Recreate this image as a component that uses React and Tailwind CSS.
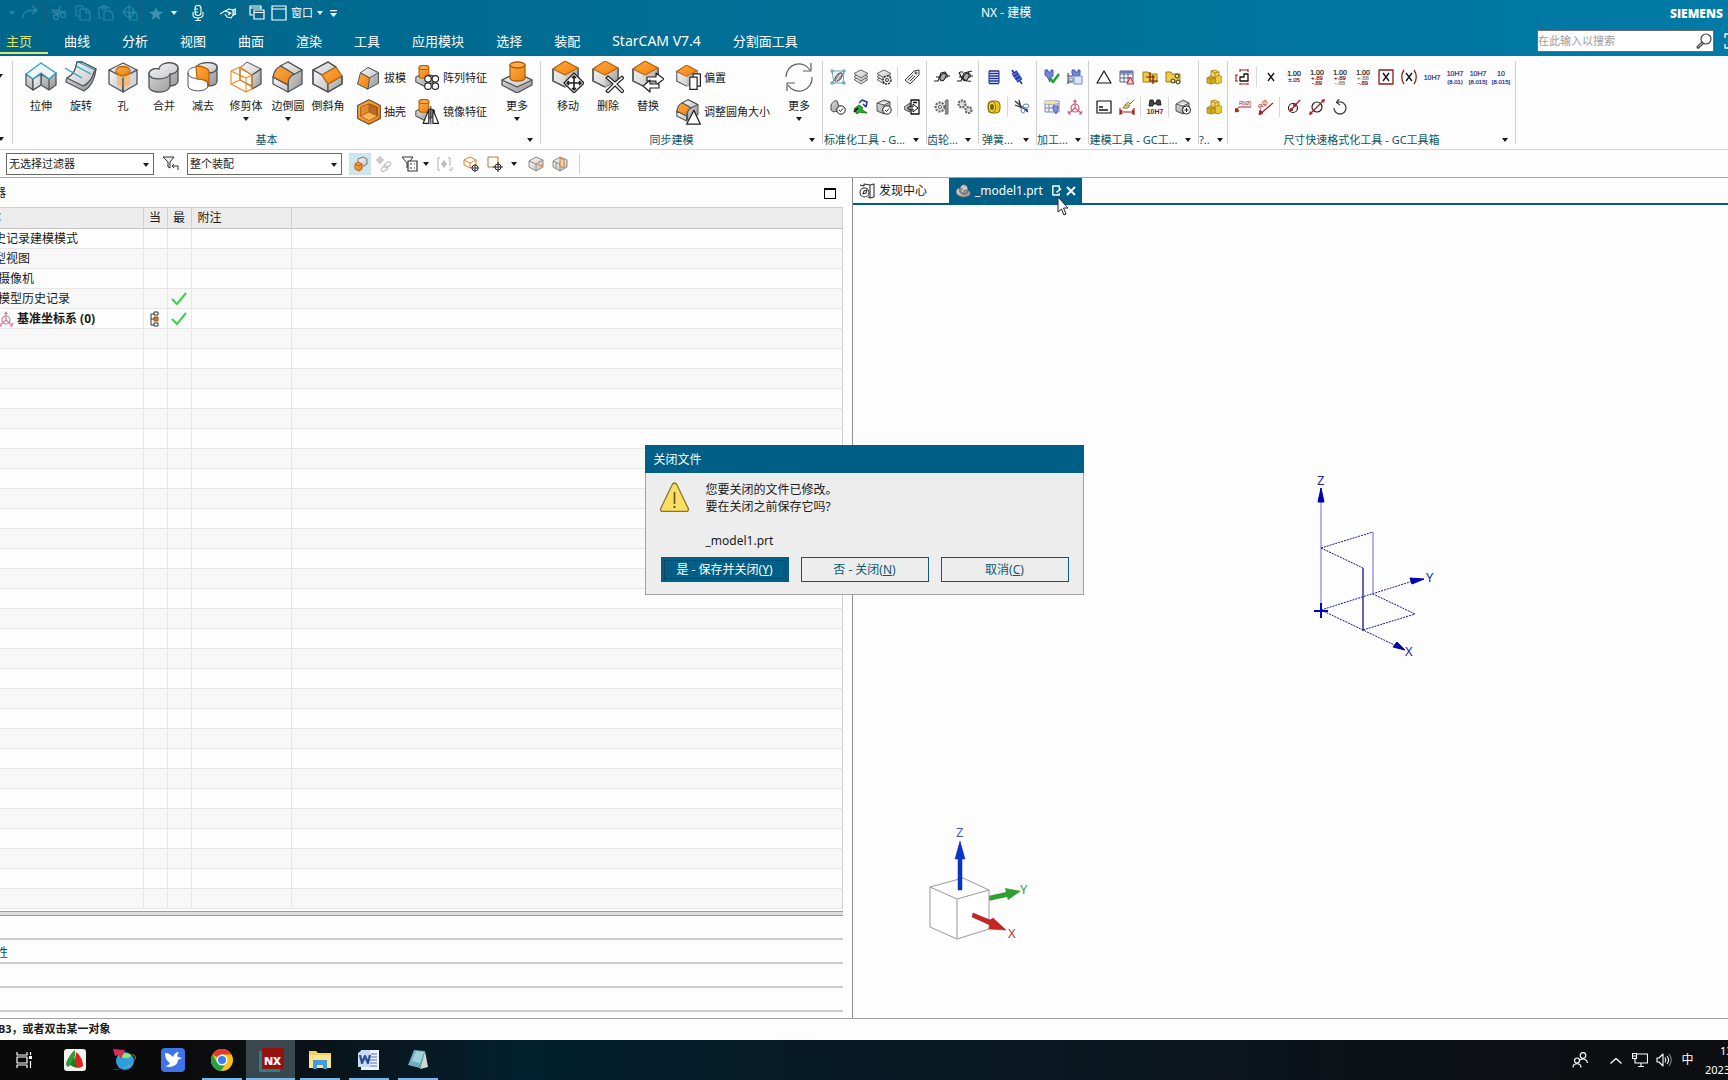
import React from "react";

const OR = "url(#gOrange)";
const GY = "url(#gGray)";
const LG = "url(#gLight)";
const DK = "#505458";

function Defs() {
  return (
    <svg width="0" height="0" className="absolute" aria-hidden="true">
      <defs>
        <linearGradient id="gOrange" x1="0" y1="0" x2="1" y2="1">
          <stop offset="0" stopColor="#ffac42" />
          <stop offset="1" stopColor="#ee7f11" />
        </linearGradient>
        <linearGradient id="gGray" x1="0" y1="0" x2="1" y2="1">
          <stop offset="0" stopColor="#e0e0e0" />
          <stop offset="1" stopColor="#959595" />
        </linearGradient>
        <linearGradient id="gLight" x1="0" y1="0" x2="1" y2="1">
          <stop offset="0" stopColor="#f8f8f8" />
          <stop offset="1" stopColor="#c4c4c4" />
        </linearGradient>
      </defs>
    </svg>
  );
}

function S({ w = 32, h, size, children, fill = "none", stroke = DK, sw = 1.3 }) {
  const d = size || w;
  const hh = h || w;
  return (
    <svg width={d} height={(d * hh) / w} viewBox={`0 0 ${w} ${hh}`} fill={fill} stroke={stroke} strokeWidth={sw} strokeLinejoin="round" className="block shrink-0" aria-hidden="true">
      {children}
    </svg>
  );
}

function Caret({ color = "#1a1a1a" }) {
  return (
    <svg width="6" height="4" viewBox="0 0 6 4" className="block shrink-0" aria-hidden="true">
      <path d="M0 0h6L3 4z" fill={color} />
    </svg>
  );
}

function CubeShape({ top = LG, left = LG, right = GY, stroke = DK }) {
  return (
    <g stroke={stroke}>
      <path d="M16 2 30 9 16 16.500 2 9z" fill={top} />
      <path d="M2 9v14l14 8V16.500z" fill={left} />
      <path d="M30 9v14l-14 8V16.500z" fill={right} />
    </g>
  );
}

/* ---------- large ribbon icons ---------- */
const Extrude = () => (
  <S>
    <path d="M1 13v11l7 5 0-11zM8 18v11l8-5V13zM16 13v11l8 5V18zM24 18v11l7-5V12z" fill={GY} />
    <path d="M8 18v11l8-5V13z" fill={LG} />
    <path d="M1 13 16 2l15 10-7 6-8-6-8 6z" fill="#f0f3f4" stroke="#2aa3c4" />
  </S>
);
const Revolve = () => (
  <S>
    <path d="M12 1h5l14 7c-1 9-4 17-12 22L1 21c0-2 0-3 1-4 7-3 9-9 10-16z" fill={GY} />
    <path d="M12 1h5l14 7-2 3c-2 7-6 12-11 14L2 17c7-3 9-9 10-16z" fill={LG} />
    <path d="M13 1 30 9M0 7l17 10M11 5l15 8" stroke="#2aa3c4" />
  </S>
);
const Hole = () => (
  <S>
    <CubeShape right="#d4d4d4" />
    <path d="M10 11v12c2 4 11 4 13 0V11z" fill="#f6b76b" stroke="none" opacity=".8" />
    <ellipse cx="16" cy="10" rx="7" ry="4.500" fill={OR} stroke="#c06408" />
    <path d="M16 17v14" />
  </S>
);
const Unite = () => (
  <S>
    <path d="M11 8C12 0 30 0 30 7v13c0 3-4 5-8 5-1 8-20 8-21 1V13c0-4 5-6 10-5z" fill={GY} />
    <path d="M11 8C12 0 30 0 30 7c0 4-4 6-8 6-1 6-21 7-21 0 0-4 5-6 10-5z" fill={LG} />
    <path d="M22 13v12" />
  </S>
);
const Subtract = () => (
  <S>
    <path d="M10 7c0-7 20-7 20-1v14c0 3-3 5-9 5V14z" fill={GY} />
    <path d="M10 7c0-7 20-7 20-1 0 4-4 6-9 6V9z" fill={LG} />
    <path d="M1 12c0-4 4-6 9-6M1 12c0 5 8 6 12 5M1 12v13c0 6 19 7 20 0M21 17v8" strokeWidth="1" />
    <path d="M9 5c8 0 14 3 13 8v11c-1-4-5-6-12-6z" fill={OR} stroke="#c06408" />
  </S>
);
const Trim = () => (
  <S>
    <path d="M10 7 17 1l14 7v15l-9 6V14z" fill={LG} stroke="none" />
    <path d="m22 14 9-6v15l-9 5z" fill={GY} />
    <path d="M10 7 17 1l14 7-9 6zM10 7v12l12 6" strokeWidth="1" />
    <path d="m1 10 9-4 12 8-6 3zM1 10v13l15 8V17M22 14v14l-6 3M10 6v13L1 23M10 19l12 7" stroke="#ee8a1c" strokeWidth="1.100" />
  </S>
);
const Blend = () => (
  <S>
    <path d="M16 1 30 9v14l-14 8V17z" fill={GY} />
    <path d="M8 5 16 1l14 8-9 5z" fill={LG} />
    <path d="M1 16v7l15 8v-7z" fill={LG} />
    <path d="M1 16C2 10 4 7 9 5l13 8c-4 2-6 5-6 11z" fill={OR} />
  </S>
);
const Chamfer = () => (
  <S>
    <path d="M16 1 24 6 10 14 1 9z" fill={LG} />
    <path d="M1 9v14l15 8v-8l-6-9z" fill={LG} />
    <path d="M16 23v8l14-8v-8z" fill={GY} />
    <path d="m10 14 14-8 6 9-14 8z" fill={OR} stroke="#b5660f" />
    <path d="M24 6 16 1 1 9v14l15 8 14-8v-8" />
  </S>
);
const Draft = ({ size = 24 }) => (
  <S size={size}>
    <path d="M16 2 30 9v14l-15 8-3-16z" fill={GY} />
    <path d="m6 9 10-7 14 7-12 7z" fill={LG} />
    <path d="M6 9 2 24l14 7 2-15z" fill={OR} />
  </S>
);
const Shell = () => (
  <S size={26}>
    <path d="M16 1 30 8v16l-14 7-14-7V8z" fill={OR} stroke="#5e4a35" />
    <path d="m16 6 10 4v11l-10 5-10-5V10z" fill="#b96a1d" stroke="#7b4a1a" />
    <path d="M16 6 6 10v11l10-5z" fill="#e08a2e" stroke="none" />
    <path d="m6 21 10-5 10 5-10 5z" fill="#ffb65b" stroke="none" />
    <path d="M16 6v10M6 21l10-5 10 5" stroke="#a85f14" strokeWidth="1" />
  </S>
);
const Boss = ({ size = 32 }) => (
  <S size={size}>
    <path d="m1 19 15-7 15 7v5l-15 8-15-8z" fill={GY} />
    <path d="m1 19 15-7 15 7-15 7z" fill={LG} />
    <path d="M9 4v13c0 4 15 4 15 0V4z" fill={OR} stroke="#b15d08" />
    <ellipse cx="16.500" cy="4" rx="7.500" ry="3" fill="#ffaf4f" stroke="#b15d08" />
  </S>
);
const Pattern = () => (
  <S size={26}>
    <path d="m1 15 9-5 14 4v6l-11 7-12-6z" fill={GY} />
    <path d="M5 3v11c0 3 12 3 12 0V3z" fill={OR} stroke="#b15d08" />
    <ellipse cx="11" cy="3" rx="6" ry="2.500" fill="#ffaf4f" stroke="#b15d08" />
    <g fill="#fff" stroke="#222" strokeWidth="1.400"><circle cx="16" cy="17" r="4" /><circle cx="25" cy="17" r="4" /><circle cx="16" cy="26" r="4" /><circle cx="25" cy="26" r="4" /></g>
  </S>
);
const Mirror = () => (
  <S size={26}>
    <path d="m1 15 9-5 14 4v6l-11 7-12-6z" fill={GY} />
    <path d="M5 3v11c0 3 12 3 12 0V3z" fill={OR} stroke="#b15d08" />
    <ellipse cx="11" cy="3" rx="6" ry="2.500" fill="#ffaf4f" stroke="#b15d08" />
    <path d="M17 13v17l-7 0zM22 13v17h7z" fill="#fff" stroke="#222" strokeWidth="1.500" />
    <path d="M19.500 9v22" stroke="#222" />
  </S>
);
const TopCube = ({ children }) => (
  <S>
    <path d="M13 1 26 7v12l-13 7L1 20V8z" fill={LG} />
    <path d="m13 13 13-6v12l-13 7z" fill={GY} stroke="none" />
    <path d="M13 0 26 7 13 14 1 8z" fill={OR} stroke="#c06408" />
    <path d="M1 8v12l12 6M26 8v10" />
    {children}
  </S>
);
const Move = () => (
  <TopCube>
    <path d="m22 12 10 10-10 10-10-10z" fill="#fff" stroke="#222" />
    <path d="M22 15v14M15 22h14M20 17l2-2 2 2M20 27l2 2 2-2M17 20l-2 2 2 2M27 20l2 2-2 2" stroke="#222" strokeWidth="1.600" />
  </TopCube>
);
const Delete = () => (
  <TopCube>
    <path d="m16 15 7 6 7-6 2 2-7 6 7 7-2 2-7-7-7 7-2-2 7-7-7-6z" fill="#fff" stroke="#222" strokeWidth="1.100" />
  </TopCube>
);
const Replace = () => (
  <TopCube>
    <path d="M15 16h9v-4l8 6-8 6v-4h-9z" fill="#fff" stroke="#222" strokeWidth="1.200" />
    <path d="M27 23h-9v-4l-7 6 7 6v-4h9z" fill="#fff" stroke="#222" strokeWidth="1.200" />
  </TopCube>
);
const Offset = () => (
  <S size={26}>
    <path d="M13 1 26 7v12l-13 7L1 20V8z" fill={LG} />
    <path d="m13 13 13-6v12l-13 7z" fill={GY} stroke="none" />
    <path d="M13 0 26 7 13 14 1 8z" fill={OR} stroke="#c06408" />
    <path d="M21 11h9v15h-9z" fill="#fff" stroke="#222" strokeWidth="1.500" />
    <path d="M17 15h9v15h-9z" fill="#fff" stroke="#222" strokeWidth="1.500" />
  </S>
);
const ResizeBlend = () => (
  <S size={26}>
    <path d="m15 1 12 6v12l-13 7z" fill={GY} />
    <path d="M7 5 15 1l12 6-9 4z" fill={LG} />
    <path d="M1 15v6l12 6v-7z" fill={LG} />
    <path d="M1 15C2 9 4 6 8 5l11 6c-4 2-6 5-6 10z" fill={OR} />
    <path d="m22 14 8 17H13z" fill="#fff" stroke="#222" strokeWidth="1.500" />
  </S>
);
const Refresh = () => (
  <S sw={1.2} stroke="#5a5e62">
    <path d="M3 16A13 13 0 0 1 27 9M29 16A13 13 0 0 1 5 24" />
    <path d="M28 2v8h-8M4 30v-8h8" />
  </S>
);

/* ---------- small ribbon icons (16 px) ---------- */
const T = (p) => <S w={16} sw={1} {...p} />;
const Layers = ({ gear }) => (
  <T>
    <g fill={LG} stroke="#666"><path d="m8 7 7 3.500-7 4.500-7-4.500z" /><path d="m8 4 7 3.500L8 12 1 7.500z" /><path d="m8 1 7 3.500L8 9 1 4.500z" /></g>
    {gear && <g stroke="#333"><circle cx="11" cy="11" r="4" fill="#eee" strokeWidth="1.500" strokeDasharray="2 1" /><circle cx="11" cy="11" r="1.500" fill="#fff" /></g>}
  </T>
);
const Sketch = () => (
  <T><path d="M2 2h12M2 2l2 12M14 2l-1 12M2 14h12" stroke="#5fa3bd" /><path d="M5 12C4 8 8 3 12 4c1 4-2 9-7 8z" fill="#9aa0a3" stroke="#444" /><path d="M6 12 11 5" stroke="#eee" /><g fill="#fff" stroke="#2a7fa3" strokeWidth=".800"><path d="M1 1h2v2H1zM13 1h2v2h-2zM1 13h2v2H1zM13 13h2v2h-2z" /></g></T>
);
const Tag = () => <T stroke="#444"><path d="m1 11 9-9 5-1v5l-9 9z" fill="#e9e9e9" /><circle cx="12" cy="4" r="1" /><path d="m4 11 5-5M6 12l5-5" /></T>;
const Check2 = ({ cube }) => (
  <T>{cube ? <path d="m1 4 7-3 6 2v8l-6 4-7-3zM1 4l7 2 6-3M8 6v9" fill={GY} stroke="#555" /> : <path d="M1 6c2-4 5-5 6-4l3 8c-4 4-8 3-9 1z" fill={GY} stroke="#444" />}<circle cx="11" cy="11" r="4.200" fill="#fff" stroke="#222" /><path d="m9 11 1.500 1.500L13 9.500" stroke="#222" /></T>
);
const GreenTool = () => <T><path d="m1 10 5-4 4 3-2 1 6 4-8-1-2 2z" fill="#2bb52b" stroke="#127a12" /><path d="m6 4 3-3 5 2-1 5M10 5l3 3" stroke="#2233bb" strokeWidth="1.500" /><path d="m1 13 4-4" stroke="#222" strokeWidth="2" /></T>;
const ExportPart = () => <T><path d="M0 8 6 4v9l-5-2z" fill={GY} /><path d="M7 1h8v14H7z" fill="#fff" stroke="#111" strokeWidth="1.300" /><path d="M4 8h5V5l5 4-5 4v-3H4z" fill="#fff" stroke="#111" /><path d="M9 3.500h4" stroke="#111" strokeWidth="1.500" /></T>;
const GearPair = ({ two }) => <T stroke="#222" sw={1.100}><path d="M0 12h4l3-8 4-1 3 4h2M2 8h12" /><ellipse cx="9" cy="8" rx="2.500" ry="4" fill="#aaa" transform="rotate(30 9 8)" />{two && <path d="M2 3c2 7 7 10 12 9M3 3h3M11 3l4-1" />}</T>;
const Rack = () => <T stroke="#666"><circle cx="6" cy="8" r="4.500" fill="#ddd" strokeWidth="2" strokeDasharray="2 1.200" /><circle cx="6" cy="8" r="1.500" fill="#fff" /><path d="M14 1v14h-3l1-2-1-2 1-2-1-2 1-2-1-2 1-2h2z" fill="#999" /></T>;
const Gears = () => <T stroke="#666"><circle cx="5" cy="5" r="3.500" fill="#ddd" strokeWidth="2.200" strokeDasharray="2 1" /><circle cx="11.500" cy="11" r="3" fill="#ddd" strokeWidth="2.200" strokeDasharray="2 1" /></T>;
const SpringV = () => <T stroke="#1c2e9b" sw={1.500}><path d="M3 2h10M3 4.500h10M3 7h10M3 9.500h10M3 12h10M3 14.500h10" /><path d="M3 2v12M13 2v12" strokeWidth="1" /></T>;
const SpringT = () => <T stroke="#1c2e9b" sw={3}><path d="m5 3 6 9" strokeWidth="6" stroke="#2c3fb4" /><path d="M3 1l2 3M11 12l2 3" strokeWidth="1.500" /><path d="m3 6 5-2M5 9l5-3M7 12l5-3" stroke="#8fa0ee" strokeWidth=".800" /></T>;
const SpringD = () => <T stroke="#8a6f00"><rect x="2" y="2" width="12" height="12" rx="4" fill="#e8c520" /><ellipse cx="6" cy="8" rx="3.500" ry="5.500" fill="#f7e25c" /><ellipse cx="6" cy="8" rx="1.500" ry="3" fill="#7a6200" /></T>;
const SpringX = () => <T stroke="#333"><path d="m1 2 13 11M1 6l13 5M5 1l2 8" strokeWidth="1.300" /><ellipse cx="9" cy="11" rx="2" ry="3" stroke="#5a7bd0" /><ellipse cx="12" cy="7" rx="3" ry="2" stroke="#5a7bd0" /></T>;
const PurpleCheck = () => <T><path d="M1 1h3v2h3V1h2v6L6 9v4L4 9 1 6z" fill="#6f86d6" stroke="#4a5cab" /><path d="m6 9 3 4 6-8" stroke="#1ea52b" strokeWidth="2.500" /></T>;
const PurpleDoc = () => <T><path d="M1 4v11M1 7h5M1 13h5" stroke="#333" /><path d="M5 1h3v2h3V1h2v5L8 8 5 5z" fill="#6f86d6" stroke="#4a5cab" /><path d="M7 7h8v8H7zM2 9h4v3H2z" fill="#dfe5fb" stroke="#6f86d6" /></T>;
const GridPin = () => <T><path d="M1 2h14v11H1zM1 5h14M1 9h14M5 2v11M10 2v11" fill="#eef" stroke="#7f8ba5" /><path d="M1 2h10v3H1z" fill="#f7e67e" stroke="none" /><path d="M9 7h5v3l-2 5-3-5z" fill="#8794d8" stroke="#5561ad" /></T>;
const Csys = ({ color = "#d0587a" }) => <T stroke={color} sw={1.2}><path d="M8 1v8M8 9l-6 5M8 9l6 5M6.500 3 8 1l1.500 2M1 12l1 3h2M15 12l-1 3h-2" /><circle cx="8" cy="9" r="4" /></T>;
const Tri = () => <T stroke="#111" sw={1.2}><path d="m8 2 7 12H1z" /></T>;
const TableTri = () => <T><path d="M1 2h13v11H1zM1 5h13M1 9h13M5 2v11M9 2v11" fill="#fff" stroke="#5c5c8a" /><path d="M1 2h13v2H1z" fill="#6d77b8" stroke="none" /><path d="m11 8 4 7H8z" fill="#f4c9c9" stroke="#c22" /></T>;
const Folder = ({ k }) => <T><path d="M1 3h5l1 2h8v8H1z" fill="#f0cc45" stroke="#9b7d12" />{k === 1 ? <path d="M8 3v9M4 8h9M11 6v9M7 12h9" stroke="#7a1616" strokeWidth="1.200" /> : <g stroke="#333" fill="#f6e489"><circle cx="12" cy="7" r="2" /><circle cx="8" cy="12" r="2" /><circle cx="13" cy="13" r="2" /></g>}</T>;
const Note = () => <T stroke="#111" sw={1.2}><path d="M1 2h14v12H1z" fill="#fff" /><path d="M3 8h4M3 11h9" strokeWidth="1.500" /></T>;
const Brush = () => <T><path d="m6 6 3-3 2 2 4-4M6 6l-2 3h5l2-3z" fill="#e7d37f" stroke="#8a7a3a" /><path d="M1 9v7M15 9v7M1 13h14M3 11l-2 2 2 2M13 11l2 2-2 2" stroke="#a61d1d" strokeWidth="1.200" /></T>;
const Find10 = () => (
  <T><path d="M3 1h3l1 3h2l1-3h3l1 5h-4V5H6v2H2z" fill="#444" stroke="#222" /><text x="8" y="15" textAnchor="middle" fontSize="7" fontWeight="700" fill="#7a1616" stroke="none" fontFamily="Liberation Sans">10H7</text></T>
);
const CubePlus = () => <T><path d="m1 5 7-4 6 3v7l-6 4-7-3zM1 5l7 2 6-3M8 7v8" fill={GY} stroke="#555" /><circle cx="11.500" cy="11" r="4" fill="#fff" stroke="#222" /><path d="M9.500 11h4M11.500 9v4" stroke="#222" /></T>;
const GoldCubes = () => <T stroke="#a07b0c" sw={.8}><path d="m5 2 4-1 4 2v5L9 9 5 7z" fill="#f3d75a" /><path d="m9 8 4-2 3 2v5l-4 2-3-1z" fill="#eac838" /><path d="m1 9 3-2 5 2v5l-4 1-4-1z" fill="#d9b01a" /><path d="m1 9 4 1 4-1M5 10v5M5 2l4 2 4-1M9 4v4" /></T>;
const DimPart = () => <T stroke="#a61d1d" sw={1.100}><path d="M5 1h8M5 0v3M13 0v3M1 6v6M0 6h3M0 12h3M5 15h8M5 14v2M13 14v2" /><path d="M5 12h8V5H9v3H5z" stroke="#111" strokeWidth="1.300" fill="#fff" /></T>;
const XIcon = ({ box, paren }) => (
  <T><path d="m5 4 6 8M11 4l-6 8" stroke="#111" strokeWidth="1.300" />{box && <path d="M1 1h14v14H1z" stroke="#8e1b1b" strokeWidth="1.300" />}{paren && <path d="M3 1C0 5 0 11 3 15M13 1c3 4 3 10 0 14" stroke="#8e1b1b" strokeWidth="1.300" />}</T>
);
const tones = { red: "#8e1b1b", blue: "#1d2f96", gray: "#8a8a8a", black: "#111111" };
const Num = ({ lines }) => (
  <svg width="20" height="18" viewBox="0 0 20 18" className="block" aria-hidden="true" fontFamily="Liberation Sans" textAnchor="middle">
    {lines.map(([t, tone, size, y], i) => (
      <text key={i} x="10" y={y} fontSize={size} fill={tones[tone]} stroke={tones[tone]} strokeWidth=".200">{t}</text>
    ))}
  </svg>
);
const Leader = ({ slant }) => slant ? (
  <T stroke="#b02020"><path d="M2 15 15 4" strokeWidth="1.200" /><path d="m1 16 1-5 3 3z" fill="#b02020" /><text x="1" y="9" fontSize="7" fill="#b02020" stroke="none" transform="rotate(-38 4 8)" fontFamily="Liberation Sans">RØ</text></T>
) : (
  <T stroke="#b02020"><path d="M1 12l3-4h12" /><path d="m0 13 1-4 3 3z" fill="#b02020" /><text x="4" y="6" fontSize="6" fill="#b02020" stroke="none" fontFamily="Liberation Sans">R[Ø]</text></T>
);
const Dia = ({ big }) => big ? <T><circle cx="8" cy="8" r="5" stroke="#222" strokeWidth="1.200" /><path d="M1 15 15 1" stroke="#b02020" strokeWidth="1.300" /><path d="m0 16 1-4 3 3zM16 0l-4 1 3 3z" fill="#b02020" stroke="none" /></T>
  : <T><circle cx="7" cy="9" r="4.500" stroke="#222" strokeWidth="1.200" /><path d="M4 12 14 1" stroke="#b02020" strokeWidth="1.300" /><path d="m4 12 1-3 2 2zM10 5l-3 1 2 2z" fill="#b02020" stroke="#b02020" /></T>;
const Undo = () => <T stroke="#444" sw={1.300}><path d="M5 3.500C10 1.500 14 5 14 9a6 6 0 0 1-12 0" /><path d="M7 0 4.500 3.500 8 6" /></T>;

/* ---------- ribbon structure ---------- */
function Big({ icon, label, wide, more }) {
  return (
    <button className={`flex flex-col items-center ${wide || "w-10"}`}>
      {icon}
      <span className="mt-[5px] text-[11px] leading-4 whitespace-nowrap">{label}</span>
      {more && <span className="mt-[3px]"><Caret /></span>}
    </button>
  );
}
function Row({ icon, label }) {
  return (
    <button className="flex h-[26px] items-center gap-1 text-[11px] whitespace-nowrap">
      <span className="grid w-6 place-items-center">{icon}</span>
      {label}
    </button>
  );
}
function Group({ title, width, children, body = "" }) {
  return (
    <section className={`flex h-[83px] shrink-0 flex-col border-r border-[#d0d0d0] ${width || ""}`}>
      <div className={`flex flex-1 ${body}`}>{children}</div>
      <div className="flex h-2 items-center text-[11px] leading-4 text-[#0b5563]">
        <span className="flex-1 text-center whitespace-nowrap">{title}</span>
        <button className="grid w-5 shrink-0 place-items-center" aria-label={`${title} 选项`}><Caret /></button>
      </div>
    </section>
  );
}
function Tools({ items }) {
  return (
    <div className="flex h-6 items-center">
      {items.map((it, i) =>
        it === "|" ? <span key={i} className="mx-[2px] h-5 w-px bg-[#d8d8d8]" /> : (
          <button key={i} aria-label="工具" className="grid h-6 w-[23px] place-items-center">{it}</button>
        )
      )}
    </div>
  );
}
function ToolGroup({ title, width, rows }) {
  return (
    <Group title={title} width={width} body="flex-col gap-[6px] pl-[3px] pt-1">
      {rows.map((r, i) => <Tools key={i} items={r} />)}
    </Group>
  );
}

function Ribbon() {
  return (
    <div className="flex h-[94px] shrink-0 overflow-hidden border-b border-[#d6d6d6] bg-[#fdfdfd] pt-[5px] text-[#1a1a1a]">
      <div className="flex h-[83px] w-[13px] shrink-0 flex-col justify-between border-r border-[#d0d0d0] pt-[13px] pb-[3px]">
        <span className="-ml-[3px]"><Caret /></span>
        <span className="-ml-[2px]"><Caret /></span>
      </div>
      <Group title="基本" body="pl-2 pr-[3px]">
        <Big icon={<Extrude />} label="拉伸" />
        <Big icon={<Revolve />} label="旋转" />
        <Big icon={<Hole />} label="孔" wide="w-11" />
        <Big icon={<Unite />} label="合并" wide="w-[38px]" />
        <Big icon={<Subtract />} label="减去" />
        <Big icon={<Trim />} label="修剪体" wide="w-[46px]" more />
        <Big icon={<Blend />} label="边倒圆" wide="w-[38px]" more />
        <Big icon={<Chamfer />} label="倒斜角" wide="w-[42px]" />
        <div className="ml-[7px] flex w-[59px] flex-col gap-2 pt-[4px]">
          <Row icon={<Draft />} label="拔模" />
          <Row icon={<Shell />} label="抽壳" />
        </div>
        <div className="flex w-[82px] flex-col gap-2 pt-[4px]">
          <Row icon={<Pattern />} label="阵列特征" />
          <Row icon={<Mirror />} label="镜像特征" />
        </div>
        <Big icon={<Boss />} label="更多" more />
      </Group>
      <Group title="同步建模" body="pl-[7px] pr-[3px]">
        <Big icon={<Move />} label="移动" />
        <Big icon={<Delete />} label="删除" />
        <Big icon={<Replace />} label="替换" />
        <div className="ml-2 flex w-[103px] flex-col gap-2 pt-[4px]">
          <Row icon={<Offset />} label="偏置" />
          <Row icon={<ResizeBlend />} label="调整圆角大小" />
        </div>
        <Big icon={<Refresh />} label="更多" more />
      </Group>
      <ToolGroup title="标准化工具 - G..." width="w-[104px]" rows={[
        [<Sketch />, <Layers />, <Layers gear />, "|", <Tag />],
        [<Check2 />, <GreenTool />, <Check2 cube />, "|", <ExportPart />],
      ]} />
      <ToolGroup title="齿轮..." width="w-[52px]" rows={[[<GearPair />, <GearPair two />], [<Rack />, <Gears />]]} />
      <ToolGroup title="弹簧..." width="w-[58px]" rows={[[<SpringV />, <SpringT />], [<SpringD />, "|", <SpringX />]]} />
      <ToolGroup title="加工..." width="w-[52px]" rows={[[<PurpleCheck />, <PurpleDoc />], [<GridPin />, <Csys />]]} />
      <ToolGroup title="建模工具 - GC工..." width="w-[110px]" rows={[
        [<Tri />, <TableTri />, <Folder k={1} />, <Folder k={2} />],
        [<Note />, <Brush />, "|", <Find10 />, "|", <CubePlus />],
      ]} />
      <ToolGroup title="?.." width="w-[29px]" rows={[[<GoldCubes />], [<GoldCubes />]]} />
      <ToolGroup title="尺寸快速格式化工具 - GC工具箱" width="w-[288px]" rows={[
        [
          <DimPart />, "|", <XIcon />,
          <Num lines={[["1.00", "black", 7, 8], ["±.05", "red", 6, 14]]} />,
          <Num lines={[["1.00", "black", 7, 7], ["+.89", "red", 6, 12], ["-.89", "red", 6, 17]]} />,
          <Num lines={[["1.00", "black", 7, 7], ["+.89", "red", 6, 12], ["-.88", "gray", 6, 17]]} />,
          <Num lines={[["1.00", "black", 7, 7], ["+.88", "gray", 6, 12], ["-.89", "red", 6, 17]]} />,
          <XIcon box />, <XIcon paren />,
          <Num lines={[["10H7", "blue", 7, 12]]} />,
          <Num lines={[["10H7", "blue", 7, 8], ["(8.01)", "blue", 6, 16]]} />,
          <Num lines={[["10H7", "blue", 7, 8], ["[8.015]", "blue", 6, 16]]} />,
          <Num lines={[["10", "blue", 7, 8], ["[8.015]", "blue", 6, 16]]} />,
        ],
        [<Leader />, <Leader slant />, "|", <Dia />, <Dia big />, <Undo />],
      ]} />
    </div>
  );
}

/* ---------- header ---------- */
const faded = "#2a86a8";
const Sep = () => <span className="h-5 w-px bg-[#1b5d7a]" />;
function QuickButton({ label, children, width = "w-6" }) {
  return <button aria-label={label} className={`grid h-6 place-items-center ${width}`}>{children}</button>;
}
function Header() {
  const tabs = ["主页", "曲线", "分析", "视图", "曲面", "渲染", "工具", "应用模块", "选择", "装配", "StarCAM V7.4", "分割面工具"];
  return (
    <header className="relative flex h-14 shrink-0 flex-col overflow-hidden bg-gradient-to-r from-[#00668a] to-[#007aa6] text-white">
      <div className="flex h-[26px] items-center pl-2">
        <QuickButton label="撤消选项" width="w-2"><Caret color={faded} /></QuickButton>
        <QuickButton label="重做" width="w-7"><T stroke={faded} sw={1.3}><path d="M1 13C1 7 4 5 14 5M10 1l5 4-5 4" /></T></QuickButton>
        <Sep />
        <QuickButton label="剪切" width="w-7"><T stroke={faded} sw={1.3}><path d="M1 5l14 2M9 1 6 11" /><circle cx="5" cy="12" r="2.500" /><circle cx="12" cy="10" r="2.500" /><path d="m1 7 9 2" /></T></QuickButton>
        <QuickButton label="复制" width="w-[19px]"><T stroke={faded} sw={1.2}><path d="M5 11H1V1h7v3M5 4h7l3 3v8H5zM11 4v4h4" /></T></QuickButton>
        <QuickButton label="粘贴" width="w-[27px]"><T stroke={faded} sw={1.2}><path d="M4 13H1V2h10v3M4 1h4v3H4zM6 6h6l3 3v6H6z" /></T></QuickButton>
        <QuickButton label="移至图层" width="w-[21px]"><T stroke={faded} sw={1.2}><circle cx="7" cy="7" r="5" /><path d="M7 0v14M0 7h14M8 8h7v7H8z" /></T></QuickButton>
        <Sep />
        <QuickButton label="收藏" width="w-[29px]"><T stroke="none" fill="#3c92b2"><path d="m8 2 2 4.500 5 .5-4 3 1.300 5L8 12l-4.300 3L5 10 1 7l5-.5z" /></T></QuickButton>
        <QuickButton label="收藏选项" width="w-2"><Caret color="#fff" /></QuickButton>
        <span className="w-1" /><Sep />
        <QuickButton label="语音" width="w-[30px]"><T stroke="#fff" sw={1.1}><rect x="5" y="0.500" width="6" height="10" rx="3" /><path d="M5 4h3M5 7h3M3 7v3c0 4 10 4 10 0V7M8 13v3M5 15.500h6" /></T></QuickButton>
        <Sep />
        <QuickButton label="触摸模式" width="w-7"><T stroke="#fff" sw={1.1}><path d="m0 9 5-3 3 1 3 1-3 2M5 6l4-2 4 1 3-1v5l-3 1-2 3-4-1-2-3M8 7l2 2" /><path d="m13 5 3-1v5l-3 1z" fill="#8fc4d8" /></T></QuickButton>
        <Sep />
        <QuickButton label="切换窗口" width="w-7"><T stroke="#fff" sw={1.2}><path d="M4 10H1V1h11v3M1 3h11M5 5h10v9H5zM5 7.500h10" /></T></QuickButton>
        <button className="flex items-center gap-1 text-[11px] leading-4">
          <T stroke="#fff" sw={1.2}><path d="M1 1h14v14H1zM1 4h14" /></T>
          窗口
          <Caret color="#fff" />
        </button>
        <QuickButton label="自定义" width="w-5"><svg width="7" height="7" viewBox="0 0 7 7"><path d="M0 0h7v1.200H0zM0 3h7L3.500 7z" fill="#fff" /></svg></QuickButton>
      </div>
      <div className="pointer-events-none absolute top-[4px] left-[981px] text-[12px] leading-[18px]">NX - 建模</div>
      <div className="absolute top-[5px] left-[1670px] font-['Open_Sans',sans-serif] text-[12px] leading-[18px] font-extrabold">SIEMENS</div>
      <nav className="flex h-[30px] items-center gap-8 pl-[6px] text-[13px] whitespace-nowrap">
        {tabs.map((t, i) => (
          <a key={t} href="#" className={i === 0 ? "relative leading-5 text-[#dfe66c]" : t.startsWith("Star") ? "text-sm leading-5" : "leading-5"}>
            {t}
            {i === 0 && <span className="absolute top-[21px] -left-[6px] h-[2px] w-12 bg-[#dfe66c]" />}
          </a>
        ))}
        <div className="ml-auto flex items-center gap-[10px]">
          <label className="flex h-[22px] w-[177px] items-center border border-[#6d6d6d] bg-white">
            <input aria-label="搜索" placeholder="在此输入以搜索" className="w-full min-w-0 flex-1 text-[11px] text-black outline-none placeholder:text-[#9a9a9a]" />
            <span className="mr-[1px]"><S w={16} stroke="#444" sw={1.2}><circle cx="10" cy="6" r="5" /><path d="m6 9-5 5 1 1.500 5.500-5" /></S></span>
          </label>
          <button aria-label="全屏" className="w-1 overflow-hidden"><S w={16} stroke="#fff" sw={1.3}><path d="M5 1H1v4M1 11v4h4" /></S></button>
        </div>
      </nav>
    </header>
  );
}

/* ---------- selection bar ---------- */
function Combo({ value, width, label }) {
  return (
    <div className={`relative h-[22px] ${width}`}>
      <select aria-label={label} className="block h-full w-full appearance-none border border-[#6a6a6a] bg-white pl-[2px] text-[11px] leading-5 text-[#1a1a1a]" defaultValue={value}>
        <option>{value}</option>
      </select>
      <span className="pointer-events-none absolute top-[10px] right-[5px]"><Caret /></span>
    </div>
  );
}
function IconBtn({ label, children, className = "w-[26px]" }) {
  return <button aria-label={label} className={`grid h-[22px] place-items-center ${className}`}>{children}</button>;
}
function SelectionBar() {
  return (
    <div className="flex h-[28px] shrink-0 items-center border-b border-[#a5a5a5] bg-[#fdfdfd] pl-[6px]">
      <Combo value="无选择过滤器" width="w-[148px]" label="选择过滤器" />
      <IconBtn label="重置过滤器" className="w-[33px]"><T stroke="#333"><path d="M0 1h11L7 6v6l-2-1V6z" fill="#eee" /><path d="M15 14v-4H9M11 8 9 10l2 2" /></T></IconBtn>
      <Combo value="整个装配" width="w-[155px]" label="选择范围" />
      <span className="w-[7px]" />
      <IconBtn label="实体" className="w-[22px] bg-[#cfe5ec]"><T stroke="#777"><path d="m6 3 5-2 4 2v5l-5 3-4-3z" fill={LG} /><path d="m3 8 3-2 4 2v5l-3 2-4-2z" fill={OR} stroke="#b5600e" /><path d="m3 8 4 2 3-2" stroke="#b5600e" /></T></IconBtn>
      <IconBtn label="链接"><T stroke="#b5b5b5"><circle cx="4" cy="4" r="2.500" /><path d="M4 0v8M0 4h8" /><rect x="8" y="7" width="7" height="4" rx="2" transform="rotate(-35 11 9)" /><rect x="5" y="11" width="7" height="4" rx="2" transform="rotate(-35 8 13)" /></T></IconBtn>
      <IconBtn label="过滤列表"><T stroke="#333"><path d="M0 1h11L8 5M0 1l5 6v5" /><path d="M6 5h9v10H6zM8 8h2M8 12h2M12 8h1M12 12h1" fill="#fff" strokeWidth="1.200" /></T></IconBtn>
      <IconBtn label="过滤选项" className="w-1"><Caret /></IconBtn>
      <IconBtn label="捕捉" className="ml-1 w-[27px]"><T stroke="#b0b0b0"><path d="M3 2H1v12h2M11 2h2v8M4 8h6M7 4v8M12 14h3v-3" /><circle cx="7" cy="8" r="2" /></T></IconBtn>
      <IconBtn label="选择体"><T stroke="#dc8424"><path d="m1 4 6-3 6 3v5l-6 3-6-3zM1 4l6 3 6-3M7 7v5" /><g stroke="#333"><circle cx="12" cy="12" r="3" fill="#fff" /><path d="M12 8v8M8 12h8" /></g></T></IconBtn>
      <IconBtn label="区域选择" className="w-[22px]"><T stroke="#b57a3a"><path d="M1 1h10v10H1z" /><g stroke="#222"><circle cx="11" cy="11" r="3" fill="#fff" /><path d="M11 6v10M6 11h10" /></g></T></IconBtn>
      <IconBtn label="区域选项" className="w-4"><Caret /></IconBtn>
      <IconBtn label="截面" className="w-7"><T stroke="#8a8a8a"><path d="m1 5 7-4 7 3v7l-7 4-7-4z" fill={LG} /><path d="m1 5 7 3 7-4M8 8v7" /><path d="m6 7 9 2v3z" fill="#e79643" stroke="none" /></T></IconBtn>
      <IconBtn label="截面 2" className="w-5"><T stroke="#8a8a8a"><path d="m1 5 7-4 7 3v7l-7 4-7-4zM4 6v7M1 5l7 3v7" fill={LG} /><path d="m8 2 4 2v8l-4-2z" fill="#f3d5b3" stroke="#d07f2b" /></T></IconBtn>
      <span className="ml-[9px] h-5 w-px bg-[#cfcfcf]" />
    </div>
  );
}

/* ---------- part navigator ---------- */
const Tick = () => <span className="grid place-items-center"><S w={16} stroke="#41cf4e" sw={2}><path d="m1 8 5 5 9-11" /></S></span>;
const Dep = () => <span className="grid place-items-center"><T stroke="#333"><path d="M7 3H4v11h3M4 8h3" /><path d="M7 1h4v3H7zM7 12h4v3H7z" fill="#fff" /><path d="M7 6h4v4H7z" fill="#d07a2a" stroke="#a2530d" /></T></span>;

function Navigator() {
  const named = [
    { name: <span className="-ml-[6px]">史记录建模模式</span> },
    { name: <span className="-ml-[6px]">型视图</span> },
    { name: <span className="-ml-[2px]">摄像机</span> },
    { name: <span className="-ml-[2px]">模型历史记录</span>, latest: true },
    { name: <span className="-ml-[2px] flex items-center gap-[3px] font-bold"><Csys color="#cf7f9f" />基准坐标系 (0)</span>, cur: true, latest: true },
  ];
  const rows = Array.from({ length: 34 }, (_, i) => named[i] || {});
  return (
    <aside className="mr-[9px] flex min-h-0 flex-col overflow-hidden text-[12px] text-[#1a1a1a]">
      <div className="flex h-[29px] items-center justify-between pt-[1px]">
        <span className="-ml-[6px]">器</span>
        <button aria-label="最大化" className="mr-[7px] h-[11px] w-3 border border-t-2 border-black" />
      </div>
      <table className="w-full table-fixed border-collapse border-t border-r border-[#cfcfcf]">
        <colgroup><col className="w-[143px]" /><col className="w-6" /><col className="w-6" /><col className="w-[100px]" /><col /></colgroup>
        <thead>
          <tr className="h-[21px] border-b border-[#c4c4c4] bg-[#ececec]">
            <th className="border-r border-[#cfcfcf] p-0 text-left leading-4 font-normal"><span className="-ml-[11px]">称</span></th>
            <th className="border-r border-[#cfcfcf] p-0 leading-4 font-normal">当</th>
            <th className="border-r border-[#cfcfcf] p-0 leading-4 font-normal">最</th>
            <th className="border-r border-[#cfcfcf] py-0 pr-0 pl-[6px] text-left leading-4 font-normal">附注</th>
            <th />
          </tr>
        </thead>
        <tbody>
          {rows.map((r, i) => (
            <tr key={i} className="h-5 border-b border-[#e6e6e6] odd:bg-[#fdfdfd] even:bg-[#f8f8f8]">
              <td className="border-r border-[#e6e6e6] p-0 leading-4 whitespace-nowrap">{r.name}</td>
              <td className="border-r border-[#e6e6e6] p-0">{r.cur && <Dep />}</td>
              <td className="border-r border-[#e6e6e6] p-0">{r.latest && <Tick />}</td>
              <td className="border-r border-[#e6e6e6] p-0" />
              <td />
            </tr>
          ))}
        </tbody>
      </table>
      <div className="mt-[2px] h-[5px] shrink-0 border-y border-[#9c9c9c] bg-[#dcdcdc]" />
      <div className="h-6 shrink-0 border-b-2 border-[#cbcbcb]" />
      <div className="flex h-6 shrink-0 items-center border-b-2 border-[#cbcbcb] pt-1 text-[#0b5563]"><span className="-ml-[4px]">性</span></div>
      <div className="h-6 shrink-0 border-b-2 border-[#cbcbcb]" />
      <div className="h-6 shrink-0 border-b-2 border-[#cbcbcb]" />
    </aside>
  );
}

/* ---------- graphics area ---------- */
function Datum() {
  return (
    <svg width="150" height="200" viewBox="0 0 150 200" className="absolute top-[257px] left-[447px] overflow-visible font-['Noto_Sans',sans-serif] text-[13px]" fill="none" stroke="#15158c" aria-hidden="true">
      <path d="M21 26v128" stroke="#b3b3f2" strokeWidth="2" />
      <path d="m21 148 92-29M21 148l84 40M21 86l52-16M21 86l42 20M63 168l52-16M115 152 73 132" strokeDasharray="2 1" />
      <path d="M73 70v63" stroke="#6a6ac4" /><path d="M63 106v63" strokeWidth="1.300" />
      <path d="M21 141v15M14 149h14" stroke="#0000c0" strokeWidth="2" />
      <path d="m21 26 3 14h-6zM124 117l-14-1 2 6zM105 188l-8-8-4 5z" fill="#0000b0" stroke="#0000b0" />
      <g fill="#2424a0" stroke="none"><text x="17" y="23">Z</text><text x="126" y="120">Y</text><text x="105" y="194">X</text></g>
    </svg>
  );
}
function ViewTriad() {
  return (
    <svg width="110" height="125" viewBox="0 0 110 125" className="absolute bottom-[71px] left-[72px] overflow-visible font-['Noto_Sans',sans-serif] text-[13px]" aria-hidden="true">
      <g transform="translate(-25 -12)">
        <path d="m88 86 18-4-1-4 16 3-13 9-1-3-19 4z" fill="#2f9f36" />
        <path d="m30 77 33-9 26 12v39l-32 10-27-12z" fill="#fff" stroke="#999" />
        <path d="m30 77 27 12 32-9M57 89v40" fill="none" stroke="#999" />
        <path d="M58 80V49h-3l5-18 5 18h-3v31z" fill="#0a35c8" stroke="#0a2aa0" strokeWidth=".500" />
        <path d="m73 103 17 7 3-2 13 12-17-1 1-4-18-8z" fill="#c92424" stroke="#8f1717" strokeWidth=".500" />
        <text x="56" y="27" fill="#3d5bc8">Z</text><text x="120" y="84" fill="#3f9c4b">Y</text><text x="108" y="128" fill="#b83535">X</text>
      </g>
    </svg>
  );
}
function Graphics() {
  return (
    <main className="flex min-w-0 flex-col border-l border-[#8e8e8e]">
      <div className="flex h-[27px] shrink-0 border-b-2 border-[#005f7c] text-[12px]">
        <button className="flex w-24 items-center gap-1 pl-[6px] text-[#1a1a1a]">
          <S w={16} stroke="#333" sw={1.100}><path d="M1 2l4 1V1l6 1 4-1v13l-4 1-2-1" /><path d="M11 2v13" /><circle cx="5.500" cy="9.500" r="4.500" fill="#fff" /><path d="m4 11 1-3 3-1-1 3z" /></S>
          发现中心
        </button>
        <div className="flex w-[133px] items-center bg-[#005f87] text-white">
          <button className="flex items-center gap-[4px] pl-[6px]">
            <S w={16} stroke="#555" sw={.8}><path d="M1 9c0-3 2-4 4-4 1-3 3-4 5-3 2 0 3 3 3 5 2 1 3 3 2 5-4 4-14 2-14-3z" fill={GY} /><path d="M5 5c-1 3 0 5 3 6s5 0 5-4" fill="#8c8c8c" /><path d="M7 9c1-3 3-4 5-4" stroke="#fff" /></S>
            <span className="text-[12px]">_model1.prt</span>
          </button>
          <button aria-label="已修改" className="ml-auto"><S w={12} size={11} stroke="#fff" sw={1.600}><path d="M9 4V1H2v10h7V9M11 4 6 8" /></S></button>
          <button aria-label="关闭标签页" className="mr-[6px] ml-[4px]"><S w={10} stroke="#fff" sw={2}><path d="m1 1 8 8M9 1 1 9" /></S></button>
        </div>
      </div>
      <div className="relative min-h-0 flex-1 overflow-hidden bg-[#fdfdfd]">
        <Datum />
        <ViewTriad />
      </div>
    </main>
  );
}

/* ---------- dialog ---------- */
function Dialog() {
  const btn = "h-[25px] border border-[#0b5a78] text-[12px] text-[#0b5a78]";
  return (
    <div className="pointer-events-none absolute inset-0 bottom-10 grid place-items-center">
      <div role="dialog" aria-labelledby="dlg-title" className="pointer-events-auto w-[439px] border border-t-0 border-[#a3a3a3] bg-[#ededed] text-[12px] text-[#1a1a1a]">
        <h2 id="dlg-title" className="-mx-px flex h-7 items-center bg-[#005f87] pt-[1px] pl-[9px] text-white">关闭文件</h2>
        <div className="flex gap-4 pt-2 pl-[13px]">
          <S w={31} stroke="#8a7433" sw={1.300}><path d="M15.500 2c1 0 2 1 2.500 2l11.500 24c0 2-1 2.500-2 2.500h-24c-1 0-2-.500-2-2.500L13 4c.500-1 1.500-2 2.500-2z" fill="#f9de62" /><path d="M15.500 11v12" stroke="#5b5226" strokeWidth="1.600" /><path d="M15.500 25v2" stroke="#5b5226" strokeWidth="2" /></S>
          <p className="leading-[17px]">您要关闭的文件已修改。<br />要在关闭之前保存它吗?<br /><br />_model1.prt</p>
        </div>
        <div className="mt-2 mb-3 grid grid-cols-3 gap-3 pr-[14px] pl-[15px]">
          <button className="h-[25px] border border-[#0b5a78] bg-[#005f87] p-[2px] text-white"><span className="block border border-dotted border-[#0a2d40] leading-[17px]">是 - 保存并关闭(<u>Y</u>)</span></button>
          <button className={btn}>否 - 关闭(<u>N</u>)</button>
          <button className={btn}>取消(<u>C</u>)</button>
        </div>
      </div>
    </div>
  );
}

/* ---------- task bar ---------- */
function App1({ children, label, open, active, width = "w-[49px]" }) {
  return (
    <button aria-label={label} className={`relative grid h-10 place-items-center ${width} ${active ? "bg-[#3b474e]" : ""}`}>
      {children}
      {open && <span className={`absolute bottom-0 h-[2px] bg-[#76b9ed] ${active ? "w-full" : "w-10"}`} />}
    </button>
  );
}
function Taskbar() {
  return (
    <footer className="flex h-10 shrink-0 items-center overflow-hidden bg-gradient-to-r from-[#0b0a0a] from-10% via-[#02202f] via-30% to-[#0d0e11] to-95% text-white">
      <App1 label="任务视图" width="mr-[2px] w-12"><S w={16} stroke="#fff" sw={1.200}><path d="M1 0v3h10V0M1 5h10v6H1zM1 16v-3h10v3M14.500 0v3M14.500 9v7" /><path d="M13.500 4.500h2v2h-2z" fill="#fff" /></S></App1>
      <App1 label="看图"><S w={22} sw={0}><rect width="22" height="22" rx="3" fill="#f1f1ee" /><path d="M11 1v6c-2 5-4 9-7 11-2-1-2-3-2-4C4 9 7 4 11 1z" fill="#2f9a35" /><path d="M12 3c4 3 7 8 7 14-3 3-9 2-12-1 3-3 5-8 5-13z" fill="#dd2418" /><path d="m10 8 3 11-7-3z" fill="#1d7a25" /></S></App1>
      <App1 label="浏览器"><S w={24} sw={0}><circle cx="13" cy="13" r="9" fill="#2b9fe0" /><path d="M8 8c4-4 9-3 11 0-3 3-7 3-11 0z" fill="#9de36a" /><path d="M1 21c9 2 22-4 22-11 0-3-3-4-6-4 10-1 8 8-1 12-5 3-12 5-15 3z" fill="#f0b62e" /><path d="m1 1 12 1-4 9-2-4-4 1z" fill="#d42f55" /></S></App1>
      <App1 label="飞鸽"><S w={24} sw={0}><rect width="24" height="24" rx="4" fill="#3f74e8" /><path d="M4 5c4 0 6 2 8 4 1-3 3-5 6-5-2 2-2 4-1 5l4 1-4 2c0 4-4 7-9 7l-4-1c2 0 4-1 5-3-3-2-5-5-5-10z" fill="#fff" /></S></App1>
      <App1 label="Chrome" open><S w={24} sw={0}><circle cx="12" cy="12" r="11" fill="#fbc116" /><path d="M12 12 2.500 6.500A11 11 0 0 1 21.500 6.500H12z" fill="#e33b2e" /><path d="M2.500 6.500A11 11 0 0 0 11 23l5-8-4-3-5 2z" fill="#27a243" /><circle cx="12" cy="12" r="5.500" fill="#fff" /><circle cx="12" cy="12" r="4" fill="#3b7ded" /></S></App1>
      <App1 label="NX" open active><span className="relative h-6 w-6"><span className="absolute bottom-0 left-0 h-[21px] w-[21px] bg-[#1c8585]" /><span className="absolute top-0 left-[3px] grid h-[21px] w-[22px] place-items-end bg-[#981010] text-[11px] leading-4 font-extrabold"><span className="w-full text-center font-['Open_Sans',sans-serif]">NX</span></span></span></App1>
      <App1 label="文件资源管理器" open><S w={22} sw={0}><path d="M0 2h7l2 2h13v15H0z" fill="#f3cf63" /><path d="M0 6h22v13H0z" fill="#ffe391" /><path d="M4 11h14v9h-4v-4H8v4H4z" fill="#3f9fd8" /></S></App1>
      <App1 label="Word" open><S w={24} sw={0}><path d="M4 2h18v20H4z" fill="#eef3fb" /><path d="M14 6h6M14 9h6M12 12h8M12 15h8M8 18h12" stroke="#4e72b6" strokeWidth="1.200" /><path d="m1 5 4-3h8v17H1z" fill="#c9daf3" /><path d="m3 7 2 8 3-7 3 7 2-8" fill="none" stroke="#274e9c" strokeWidth="2.200" /></S></App1>
      <App1 label="记事本" open><S w={24} sw={0}><path d="m8 2 11 1-5 17-12-3z" fill="#6fb0bd" /><path d="m10 3 8 1-4 11-8-2z" fill="#9ed3da" /><path d="m19 3 3 16-8 2z" fill="#cfd8d8" /></S></App1>
      <div className="ml-auto flex items-center">
        <button aria-label="人脉" className="grid w-12 place-items-center"><S w={16} stroke="#fff" sw={1.200}><circle cx="11" cy="3.500" r="2.800" /><path d="M8 8c3-2 7-1 7.500 3" /><circle cx="5" cy="8.500" r="2.500" /><path d="M1 15.500c0-5 8-5 8 0" /></S></button>
        <button aria-label="显示隐藏的图标" className="grid w-6 place-items-center"><S w={12} h={7} stroke="#fff" sw={1.300}><path d="m.5 6.500 5.500-5 5.500 5" /></S></button>
        <button aria-label="网络" className="grid w-6 place-items-center"><S w={16} stroke="#fff" sw={1.100}><path d="M5 2h10.500v9H3V7M9 11v3M6 14.500h6" /><path d="M.5 1.500h4v5h-4zM1 4h3" /></S></button>
        <button aria-label="音量" className="grid w-6 place-items-center"><S w={16} stroke="#fff" sw={1.100}><path d="M1 6v4h2l4 4V2L3 6zM9 5.500c1 1.500 1 3.500 0 5M11 4c2 2.500 2 5.500 0 8" /><path d="M13 2c3 3.500 3 8.500 0 12" stroke="#888" /></S></button>
        <button className="w-[23px] text-center text-[12px]">中</button>
        <time className="ml-[6px] flex w-[23px] flex-col overflow-hidden font-['Noto_Sans',sans-serif] text-[11px] leading-[19px] whitespace-nowrap"><span className="pl-[15px]">13:</span><span>2023/</span></time>
      </div>
    </footer>
  );
}

export default function App() {
  return (
    <div className="relative flex h-screen flex-col overflow-hidden bg-[#fdfdfd] font-['Noto_Sans','Noto_Sans_CJK_SC',sans-serif]">
      <Defs />
      <Header />
      <Ribbon />
      <SelectionBar />
      <div className="grid min-h-0 flex-1 grid-cols-[852fr_876fr]">
        <Navigator />
        <Graphics />
      </div>
      <div className="flex h-[22px] shrink-0 items-center overflow-hidden border-t border-[#a0a0a0] text-[11px] font-bold whitespace-nowrap text-[#1a1a1a]">
        <span className="-ml-[2px]">B3，或者双击某一对象</span>
      </div>
      <Taskbar />
      <Dialog />
      <svg width="12" height="20" viewBox="0 0 12 20" className="pointer-events-none absolute top-[196px] left-[1057px]" aria-hidden="true">
        <path d="M1 1v15l3.500-3 2.500 6 2-1-2.500-6H11z" fill="#fff" stroke="#222" />
      </svg>
    </div>
  );
}
